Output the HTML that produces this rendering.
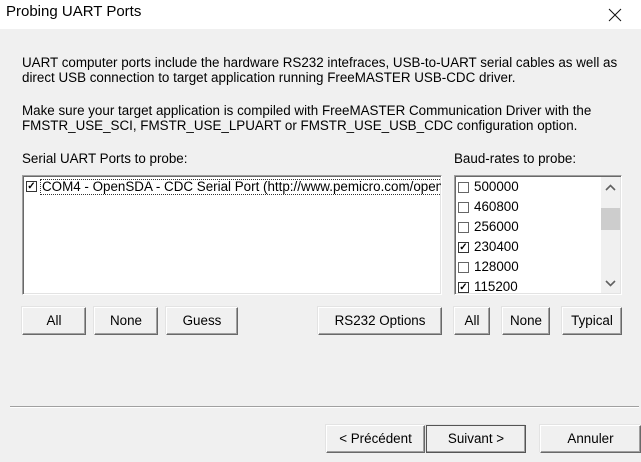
<!DOCTYPE html>
<html><head><meta charset="utf-8"><style>
*{margin:0;padding:0;box-sizing:border-box}
body{width:641px;height:462px;background:#f0f0f0;font-family:"Liberation Sans",Arial,sans-serif;font-size:13.4px;color:#000;position:relative;overflow:hidden}
.a{position:absolute;white-space:nowrap}
.title{left:0;top:0;width:641px;height:29px;background:#fff}
.btn{position:absolute;background:#f0f0f0;border-top:1px solid #fff;border-left:1px solid #fff;border-right:1px solid #696969;border-bottom:1px solid #696969;box-shadow:inset -1px -1px 0 #a0a0a0,-1px -1px 0 #e3e3e3;text-align:center;line-height:26px;height:28px}
.list{position:absolute;background:#fff;border-top:1px solid #a0a0a0;border-left:1px solid #a0a0a0;border-right:1px solid #fff;border-bottom:1px solid #fff;box-shadow:inset 1px 1px 0 #696969,inset -1px -1px 0 #e3e3e3}
.cb{position:absolute;width:11px;height:11px;border:1px solid #333;background:#fff;font-size:10px;line-height:9px;text-align:center;font-weight:bold}
.cbu{border-color:#666}
</style></head><body>
<div class="a title"></div>
<div class="a" style="left:6px;top:3px;font-size:15px;color:#000">Probing UART Ports</div>
<svg style="position:absolute;left:608px;top:8px" width="14" height="14"><path d="M1 1 L13 13 M13 1 L1 13" stroke="#111" stroke-width="1"/></svg>

<div class="a" style="left:22px;top:55px;line-height:15px">UART computer ports include the hardware RS232 intefraces, USB-to-UART serial cables as well as<br>direct USB connection to target application running FreeMASTER USB-CDC driver.</div>
<div class="a" style="left:22px;top:103px;line-height:15px">Make sure your target application is compiled with FreeMASTER Communication Driver with the<br>FMSTR_USE_SCI, FMSTR_USE_LPUART or FMSTR_USE_USB_CDC configuration option.</div>
<div class="a" style="left:22px;top:151px">Serial UART Ports to probe:</div>
<div class="a" style="left:454px;top:151px">Baud-rates to probe:</div>

<div class="list" style="left:22px;top:175px;width:420px;height:120px;overflow:hidden">
<div class="cb" style="left:3px;top:5px">✓</div>
<div class="a" style="left:17px;top:3px;border:1px dotted #333;padding:0 1px;width:402px;overflow:hidden;line-height:14px">COM4 - OpenSDA - CDC Serial Port (http://www.pemicro.com/opensda)</div>
</div>

<div class="list" style="left:454px;top:175px;width:168px;height:120px;overflow:hidden">
<div class="cb cbu" style="left:3px;top:6px"></div><div class="a" style="left:19px;top:3px">500000</div>
<div class="cb cbu" style="left:3px;top:26px"></div><div class="a" style="left:19px;top:23px">460800</div>
<div class="cb cbu" style="left:3px;top:46px"></div><div class="a" style="left:19px;top:43px">256000</div>
<div class="cb" style="left:3px;top:66px">✓</div><div class="a" style="left:19px;top:63px">230400</div>
<div class="cb cbu" style="left:3px;top:86px"></div><div class="a" style="left:19px;top:83px">128000</div>
<div class="cb" style="left:3px;top:106px">✓</div><div class="a" style="left:19px;top:103px">115200</div>
<div style="position:absolute;left:146px;top:1px;width:19px;height:116px;background:#f0f0f0"></div>
<div style="position:absolute;left:146px;top:32px;width:19px;height:22px;background:#cdcdcd"></div>
<svg style="position:absolute;left:150px;top:8px" width="11" height="8"><path d="M1 6 L5.5 1.5 L10 6" stroke="#606060" stroke-width="1.6" fill="none"/></svg>
<svg style="position:absolute;left:150px;top:103px" width="11" height="8"><path d="M1 2 L5.5 6.5 L10 2" stroke="#606060" stroke-width="1.6" fill="none"/></svg>
</div>

<div class="btn" style="left:22px;top:307px;width:64px">All</div>
<div class="btn" style="left:94px;top:307px;width:64px">None</div>
<div class="btn" style="left:166px;top:307px;width:72px">Guess</div>
<div class="btn" style="left:318px;top:307px;width:124px">RS232 Options</div>
<div class="btn" style="left:454px;top:307px;width:36px">All</div>
<div class="btn" style="left:502px;top:307px;width:48px">None</div>
<div class="btn" style="left:562px;top:307px;width:60px">Typical</div>

<div style="position:absolute;left:10px;top:406px;width:629px;height:1px;background:#a0a0a0"></div>
<div style="position:absolute;left:10px;top:407px;width:629px;height:1px;background:#fff"></div>

<div class="btn" style="left:326px;top:425px;width:99px">&lt; Précédent</div>
<div class="btn" style="left:426px;top:425px;width:100px;outline:1px solid #555;outline-offset:-1px">Suivant &gt;</div>
<div class="btn" style="left:540px;top:425px;width:101px">Annuler</div>
</body></html>
